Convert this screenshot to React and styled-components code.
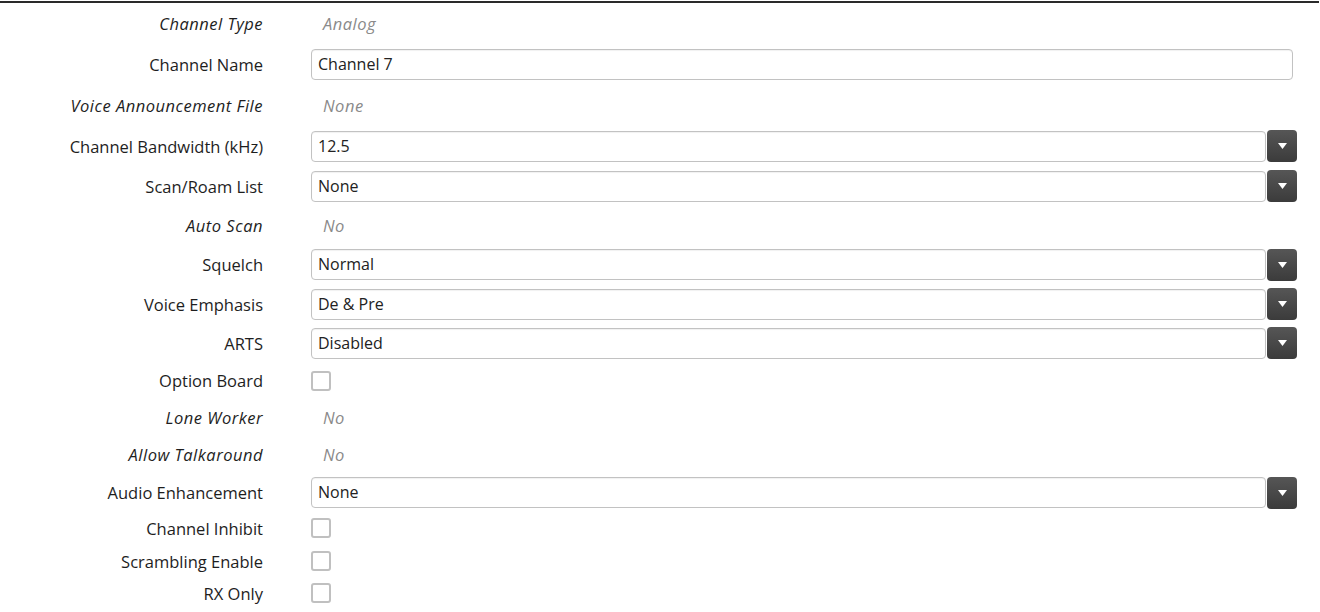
import React from 'react';
import styled, { createGlobalStyle } from 'styled-components';

const GlobalStyle = createGlobalStyle`
   html, body {
      margin: 0;
      padding: 0;
      background: #fff;
   }
   body {
      font-family: 'Open Sans', 'Noto Sans', sans-serif;
      font-size: 16.5px;
      color: #222;
   }
`;

const fields = [
   { label: 'Channel Type', kind: 'text', value: 'Analog', h: 40 },
   { label: 'Channel Name', kind: 'input', value: 'Channel 7', h: 42 },
   { label: 'Voice Announcement File', kind: 'text', value: 'None', h: 41 },
   { label: 'Channel Bandwidth (kHz)', kind: 'select', value: '12.5', h: 40 },
   { label: 'Scan/Roam List', kind: 'select', value: 'None', h: 40 },
   { label: 'Auto Scan', kind: 'text', value: 'No', h: 39 },
   { label: 'Squelch', kind: 'select', value: 'Normal', h: 39 },
   { label: 'Voice Emphasis', kind: 'select', value: 'De & Pre', h: 40 },
   { label: 'ARTS', kind: 'select', value: 'Disabled', h: 38 },
   { label: 'Option Board', kind: 'check', h: 37 },
   { label: 'Lone Worker', kind: 'text', value: 'No', h: 36 },
   { label: 'Allow Talkaround', kind: 'text', value: 'No', h: 39 },
   { label: 'Audio Enhancement', kind: 'select', value: 'None', h: 37 },
   { label: 'Channel Inhibit', kind: 'check', h: 34 },
   { label: 'Scrambling Enable', kind: 'check', h: 32 },
   { label: 'RX Only', kind: 'check', h: 32 },
];

const App = () => {
   const renderControl = (field) => {
      switch (field.kind) {
         case 'text':
            return <ReadOnly>{field.value}</ReadOnly>;
         case 'input':
            return <TextInput defaultValue={field.value} />;
         case 'select':
            return (
               <SelectWrap>
                  <SelectBox>{field.value}</SelectBox>
                  <DropButton>
                     <svg width='9' height='6' viewBox='0 0 9 6'>
                        <polygon points='0,0 9,0 4.5,6' fill='#fff' />
                     </svg>
                  </DropButton>
               </SelectWrap>
            );
         case 'check':
            return <CheckBox />;
         default:
            return null;
      }
   };

   return (
      <>
         <GlobalStyle />
         <Page>
            <TopRule />
            <Form>
               {fields.map((field, index) => (
                  <Row key={index} $h={field.h}>
                     <Label $italic={field.kind === 'text'}>{field.label}</Label>
                     <Control>{renderControl(field)}</Control>
                  </Row>
               ))}
            </Form>
         </Page>
      </>
   );
};

const Page = styled.div`
   width: 1320px;
   padding-top: 1px;
`;

const TopRule = styled.div`
   width: 1319px;
   height: 2px;
   background: #2a2a2a;
`;

const Form = styled.div`
   display: flex;
   flex-direction: column;
`;

const Row = styled.div`
   display: grid;
   grid-template-columns: 263px 1fr;
   column-gap: 48px;
   align-items: center;
   height: ${(p) => p.$h}px;
   padding-right: 23px;
`;

const Label = styled.div`
   text-align: right;
   font-style: ${(p) => (p.$italic ? 'italic' : 'normal')};
   letter-spacing: ${(p) => (p.$italic ? '0.5px' : '0')};
   color: #1e1e1e;
   white-space: nowrap;
`;

const Control = styled.div`
   display: flex;
   align-items: center;
`;

const ReadOnly = styled.div`
   font-style: italic;
   letter-spacing: 0.5px;
   color: #8a8a8a;
   padding-left: 12px;
`;

const TextInput = styled.input`
   box-sizing: border-box;
   width: calc(100% - 4px);
   height: 31px;
   border: 1px solid #c2c2c2;
   border-radius: 4px;
   padding: 0 6px;
   font-family: inherit;
   font-size: 16px;
   color: #222;
   box-shadow: inset 0 1px 1px rgba(0, 0, 0, 0.06);
   outline: none;
`;

const SelectWrap = styled.div`
   display: flex;
   align-items: center;
   width: 100%;
`;

const SelectBox = styled.div`
   box-sizing: border-box;
   flex: 1;
   height: 31px;
   line-height: 29px;
   border: 1px solid #c2c2c2;
   border-radius: 4px;
   padding: 0 6px;
   font-size: 16px;
   color: #222;
   box-shadow: inset 0 1px 1px rgba(0, 0, 0, 0.06);
`;

const DropButton = styled.div`
   width: 30px;
   height: 32px;
   margin-left: 1px;
   border-radius: 4px;
   background: linear-gradient(#565656, #3b3b3b);
   display: flex;
   align-items: center;
   justify-content: center;
`;

const CheckBox = styled.div`
   box-sizing: border-box;
   width: 20px;
   height: 20px;
   border: 2px solid #c0c0c0;
   border-radius: 3px;
   background: #fff;
`;

export default App;
